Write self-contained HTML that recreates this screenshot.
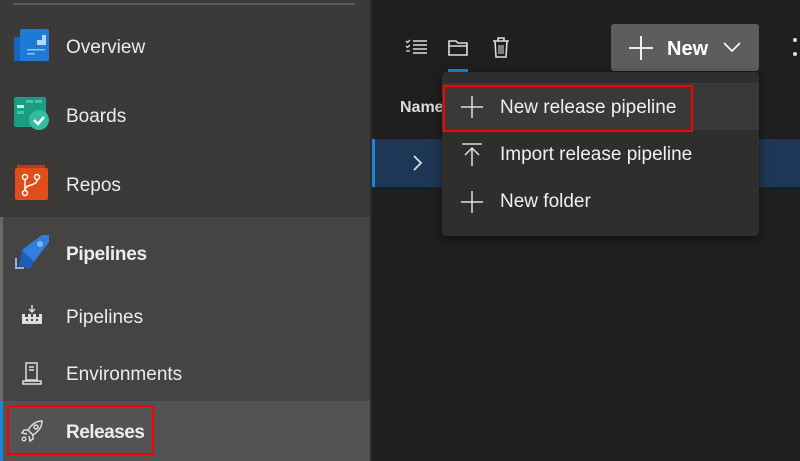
<!DOCTYPE html>
<html><head><style>
*{margin:0;padding:0;box-sizing:border-box}
body{width:800px;height:461px;overflow:hidden;background:#1f1f1f;font-family:"Liberation Sans",sans-serif;color:#f0f0f0;position:relative}
.abs{position:absolute}
.side{left:0;top:0;width:370px;height:461px;background:#3b3a39}
.lbl{position:absolute;left:66px;font-size:19px;color:#ececec}
svg{position:absolute}
</style></head><body>
<div class="abs side"></div>
<div class="abs" style="left:13px;top:3px;width:342px;height:2px;background:#5a5958"></div>
<div class="abs" style="left:0;top:217px;width:370px;height:244px;background:#454443"></div>
<div class="abs" style="left:0;top:217px;width:3px;height:244px;background:#6a6968"></div>
<div class="abs" style="left:0;top:401px;width:370px;height:60px;background:#545352"></div>
<div class="abs" style="left:0;top:401px;width:3px;height:60px;background:#1a86d8"></div>
<div class="abs" style="left:370px;top:0;width:2px;height:461px;background:#2c2b2a"></div>

<svg style="left:14px;top:28px" width="36" height="36"><rect x="0" y="9" width="10" height="24" fill="#1565c0"/><rect x="6" y="1" width="29" height="32" rx="2" fill="#1e7ad6"/><path d="M13 17h10v-5h5v-5h4v10H13z" fill="#b5d7f7"/><rect x="13" y="21" width="18" height="1.5" fill="#8ec1f0"/><rect x="13" y="25" width="8" height="1.5" fill="#8ec1f0"/></svg>
<div class="lbl" style="top:37px">Overview</div>
<svg style="left:14px;top:96px" width="36" height="36"><rect x="0" y="1" width="32" height="30" rx="2" fill="#1b9c85"/><rect x="3" y="9" width="7" height="3" fill="#c6f0e6"/><rect x="12" y="4" width="7" height="3" fill="#4cc3a6"/><rect x="21" y="4" width="7" height="3" fill="#4cc3a6"/><rect x="3" y="15" width="7" height="3" fill="#4cc3a6"/><circle cx="25" cy="24" r="10" fill="#2fbf9e"/><path d="M20 24l4 4 6-7" stroke="#fff" stroke-width="2.5" fill="none"/></svg>
<div class="lbl" style="top:106px">Boards</div>
<svg style="left:15px;top:165px" width="34" height="36"><rect x="2" y="0" width="28" height="6" fill="#c23a14"/><rect x="0" y="3" width="33" height="32" rx="2" fill="#e04e1e"/><circle cx="10" cy="12" r="2.5" stroke="#fff" stroke-width="1.5" fill="none"/><circle cx="22" cy="12" r="2.5" stroke="#fff" stroke-width="1.5" fill="none"/><circle cx="10" cy="28" r="2.5" stroke="#fff" stroke-width="1.5" fill="none"/><path d="M10 15v10M22 15c0 6-12 4-12 10" stroke="#fff" stroke-width="1.5" fill="none"/></svg>
<div class="lbl" style="top:175px">Repos</div>
<svg style="left:14px;top:234px" width="36" height="36"><path d="M8 16L28 1h7v7L20 28l-12 0z" fill="#2f7fe0"/><path d="M8 16l12 12-4 7-11-3 3-16z" fill="#1c5fb8"/><circle cx="26" cy="10" r="3" fill="#7fb6f2"/><path d="M2 24v10h8" stroke="#8ab4f0" stroke-width="2" fill="none"/></svg>
<div class="lbl" style="top:244px;font-weight:bold;letter-spacing:-0.3px">Pipelines</div>
<svg style="left:21px;top:304px" width="22" height="22"><path d="M11 1v7M8 5l3 3 3-3" stroke="#ddd" stroke-width="1.5" fill="none"/><path d="M1 10v10h20V10h-3v3h-3v-3h-3v3H10v-3H7v3H4v-3z" fill="#ddd"/><rect x="5" y="15" width="2" height="2" fill="#454443"/><rect x="10" y="15" width="2" height="2" fill="#454443"/><rect x="15" y="15" width="2" height="2" fill="#454443"/></svg>
<div class="lbl" style="top:307px">Pipelines</div>
<svg style="left:21px;top:361px" width="22" height="24"><rect x="5" y="2" width="11" height="17" stroke="#ddd" stroke-width="1.5" fill="none"/><path d="M8 6h5M8 9h5" stroke="#ddd" stroke-width="1.5"/><path d="M2 20h18v3H2z" stroke="#ddd" stroke-width="1.5" fill="none"/></svg>
<div class="lbl" style="top:364px">Environments</div>
<svg style="left:20px;top:419px" width="24" height="24"><path d="M22 2c-6 0-10 3-14 9l5 5c6-4 9-8 9-14z" stroke="#ddd" stroke-width="1.5" fill="none"/><circle cx="16" cy="8" r="2" stroke="#ddd" stroke-width="1.5" fill="none"/><path d="M8 11l-4 0-2 3 5 1M13 16v4l-3 2-1-5" stroke="#ddd" stroke-width="1.5" fill="none"/><circle cx="4" cy="20" r="1.8" stroke="#ddd" stroke-width="1.3" fill="none"/></svg>
<div class="lbl" style="top:422px;font-weight:bold;letter-spacing:-0.5px">Releases</div>
<div class="abs" style="left:7px;top:405px;width:147px;height:50px;border:2px solid #f00"></div>

<svg style="left:405px;top:38px" width="24" height="20"><path d="M8 3h14M8 7h14M8 11h14M8 15h14" stroke="#ddd" stroke-width="1.5"/><path d="M1 3l1.5 1.5L5 2M1 8l1.5 1.5L5 7M1 13h4" stroke="#ddd" stroke-width="1.3" fill="none"/></svg>
<svg style="left:447px;top:38px" width="24" height="20"><path d="M2 3h7l2 2h9v12H2z" stroke="#ddd" stroke-width="1.6" fill="none"/><path d="M2 8h18" stroke="#ddd" stroke-width="1.5"/></svg>
<div class="abs" style="left:448px;top:69px;width:20px;height:3px;background:#1a86d8"></div>
<svg style="left:491px;top:36px" width="20" height="24"><path d="M2 5h16M7 5V2h6v3" stroke="#ddd" stroke-width="1.6" fill="none"/><path d="M4 5l1 16h10l1-16" stroke="#ddd" stroke-width="1.6" fill="none"/><path d="M8 9v9M10 9v9M12 9v9" stroke="#ddd" stroke-width="1"/></svg>
<div class="abs" style="left:611px;top:24px;width:148px;height:47px;background:#5e5d5c;border-radius:3px"></div>
<svg style="left:628px;top:35px" width="26" height="26"><path d="M13 1v24M1 13h24" stroke="#fff" stroke-width="1.8"/></svg>
<div class="abs" style="left:667px;top:38px;font-size:20px;font-weight:bold;color:#fff">New</div>
<svg style="left:722px;top:40px" width="20" height="14"><path d="M2 3l8 8 8-8" stroke="#fff" stroke-width="1.6" fill="none"/></svg>
<div class="abs" style="left:793px;top:38px;width:4px;height:4px;background:#ddd;border-radius:2px"></div>
<div class="abs" style="left:793px;top:52px;width:4px;height:4px;background:#ddd;border-radius:2px"></div>
<div class="abs" style="left:400px;top:99px;font-size:16px;font-weight:bold;color:#ddd">Name</div>
<div class="abs" style="left:372px;top:139px;width:428px;height:48px;background:#1f3756"></div>
<div class="abs" style="left:372px;top:139px;width:3px;height:48px;background:#1a86d8"></div>
<svg style="left:412px;top:154px" width="12" height="18"><path d="M2 2l7 7-7 7" stroke="#ddd" stroke-width="1.8" fill="none"/></svg>

<div class="abs" style="left:442px;top:72px;width:317px;height:164px;background:#2f2e2d;border-radius:4px;box-shadow:0 3px 10px rgba(0,0,0,.5)"></div>
<div class="abs" style="left:442px;top:83px;width:317px;height:47px;background:#3a3938"></div>
<div class="abs" style="left:443px;top:85px;width:250px;height:47px;border:2px solid #f00"></div>
<svg style="left:461px;top:96px" width="22" height="22"><path d="M11 0v22M0 11h22" stroke="#ddd" stroke-width="1.5"/></svg>
<div class="abs" style="left:500px;top:97px;font-size:19px;color:#f0f0f0">New release pipeline</div>
<svg style="left:461px;top:142px" width="22" height="26"><path d="M1 2h20M11 6v18M4 13l7-7 7 7" stroke="#ddd" stroke-width="1.5" fill="none"/></svg>
<div class="abs" style="left:500px;top:144px;font-size:19px;color:#f0f0f0">Import release pipeline</div>
<svg style="left:461px;top:191px" width="22" height="22"><path d="M11 0v22M0 11h22" stroke="#ddd" stroke-width="1.5"/></svg>
<div class="abs" style="left:500px;top:191px;font-size:19px;color:#f0f0f0">New folder</div>
</body></html>
